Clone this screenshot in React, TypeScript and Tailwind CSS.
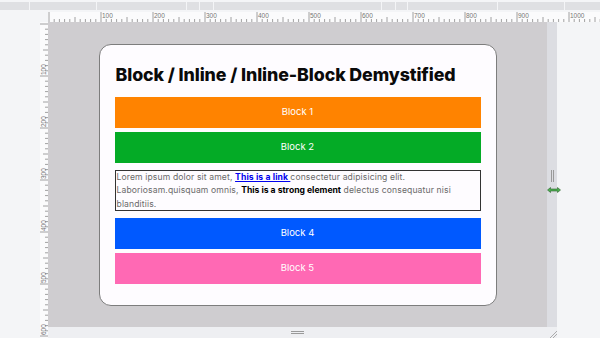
import React from "react";

const F = { fontFamily: "Inter, 'Noto Sans', sans-serif" };

function HRuler() {
  const ticks = [];
  for (let i = 0; i <= 106; i++) {
    const x = 1 + i * 5.2;
    const len = i % 10 === 0 ? 10 : i % 5 === 0 ? 5 : 3;
    ticks.push(<line key={i} x1={x} x2={x} y1={10 - len} y2={10} stroke="#8a8a8a" strokeWidth="0.8" />);
    if (i % 10 === 0 && i > 0) {
      ticks.push(
        <text key={"t" + i} x={x + 1} y={6} fontSize="6.5" fill="#777" fontFamily="'Liberation Sans', sans-serif">
          {i * 10}
        </text>
      );
    }
  }
  return (
    <svg width="552" height="10" className="block">
      {ticks}
    </svg>
  );
}

function VRuler() {
  const ticks = [];
  for (let i = 0; i <= 60; i++) {
    const y = 2 + i * 5.2;
    const len = i % 10 === 0 ? 8 : i % 5 === 0 ? 5 : 3;
    ticks.push(<line key={i} y1={y} y2={y} x1={8 - len} x2={8} stroke="#8a8a8a" strokeWidth="0.8" />);
    if (i % 10 === 0 && i > 0) {
      ticks.push(
        <text
          key={"t" + i}
          x={0}
          y={0}
          fontSize="6.5"
          fill="#777"
          fontFamily="'Liberation Sans', sans-serif"
          transform={`translate(5.5 ${y - 1}) rotate(-90)`}
        >
          {i * 10}
        </text>
      );
    }
  }
  return (
    <svg width="8" height="316" className="block">
      {ticks}
    </svg>
  );
}

export default function App() {
  return (
    <div className="w-[600px] h-[338px] bg-[#f4f5f7] flex flex-col overflow-hidden">
      <div className="h-[2px] bg-[#f4f5f7]" />
      <div className="h-[8px] flex bg-[#dfe0e3]">
        <div className="w-[30px] border-r border-[#f4f5f7]" />
        <div className="w-[67px] border-r border-[#f4f5f7]" />
        <div className="w-[90px] border-r border-[#f4f5f7]" />
        <div className="w-[13px] border-r border-[#f4f5f7]" />
        <div className="w-[14px] border-r border-[#f4f5f7]" />
        <div className="w-[168px] border-r border-[#f4f5f7]" />
        <div className="w-[14px] border-r border-[#f4f5f7]" />
        <div className="w-[12px] border-r border-[#f4f5f7]" />
        <div className="w-[90px] border-r border-[#f4f5f7]" />
        <div className="w-[67px] border-r border-[#f4f5f7]" />
        <div className="flex-1" />
      </div>
      <div className="h-[2px]" />
      <div className="h-[10px] flex">
        <div className="w-[48px]" />
        <div className="bg-[#fbfbfc]">
          <HRuler />
        </div>
      </div>
      <div className="flex flex-1">
        <div className="w-[40px]" />
        <div className="w-[8px] bg-[#fbfbfc]">
          <VRuler />
        </div>
        <div className="flex flex-col">
          <div className="flex">
            <div className="w-[499px] h-[305px] bg-[#cfcdd0] flex items-center justify-center">
              <div
                className="w-[398px] h-[262px] bg-[#fefcff] border border-[#7d7d7d] rounded-[12px] px-[15px] pt-[16px] flex flex-col"
                style={F}
              >
                <h1 className="text-[17.8px] leading-[28px] font-extrabold text-[#0a0a0a] pl-[1px] tracking-[-0.1px]">
                  Block / Inline / Inline-Block Demystified
                </h1>
                <div className="mt-[8px] h-[31px] bg-[#ff8300] text-white text-[9.5px] flex items-center justify-center">
                  Block 1
                </div>
                <div className="mt-[4px] h-[31px] bg-[#04ab26] text-white text-[9.5px] flex items-center justify-center">
                  Block 2
                </div>
                <p className="mt-[7px] h-[41px] border border-[#333] text-[8.6px] leading-[13.5px] text-[#6a6a6a] pl-[1px] overflow-hidden tracking-[0.12px]">
                  Lorem ipsum dolor sit amet,{" "}
                  <a className="text-[#0000ee] font-bold underline">This is a link </a>
                  consectetur adipisicing elit. Laboriosam.quisquam omnis,{" "}
                  <strong className="text-black font-bold tracking-normal">This is a strong element</strong> delectus
                  consequatur nisi blanditiis.
                </p>
                <div className="mt-[7px] h-[31px] bg-[#0059ff] text-white text-[9.5px] flex items-center justify-center">
                  Block 4
                </div>
                <div className="mt-[4px] h-[31px] bg-[#ff69b4] text-white text-[9.5px] flex items-center justify-center">
                  Block 5
                </div>
              </div>
            </div>
            <div className="w-[10px] h-[305px] bg-[#dcdde2] flex flex-col items-center">
              <div className="mt-[148px] w-[3px] h-[12px] border-x border-[#9a9a9a]" />
              <svg width="14" height="6" className="mt-[5px] ml-[4px]" viewBox="0 0 14 6">
                <path d="M0.5 3 L3.5 0.5 V2 H10.5 V0.5 L13.5 3 L10.5 5.5 V4 H3.5 V5.5 Z" fill="#4caf50" stroke="#2e5e2e" strokeWidth="0.6" />
              </svg>
            </div>
          </div>
          <div className="h-[11px] flex">
            <div className="w-[499px] flex justify-center items-center bg-[#eeeff2]">
              <div className="w-[13px] h-[3px] border-y border-[#9a9a9a]" />
            </div>
            <div className="w-[10px] flex items-end justify-end bg-[#eeeff2]">
              <svg width="8" height="8" viewBox="0 0 8 8">
                <line x1="1" y1="8" x2="8" y2="1" stroke="#999" strokeWidth="0.8" />
                <line x1="4" y1="8" x2="8" y2="4" stroke="#999" strokeWidth="0.8" />
              </svg>
            </div>
          </div>
        </div>
      </div>
    </div>
  );
}
